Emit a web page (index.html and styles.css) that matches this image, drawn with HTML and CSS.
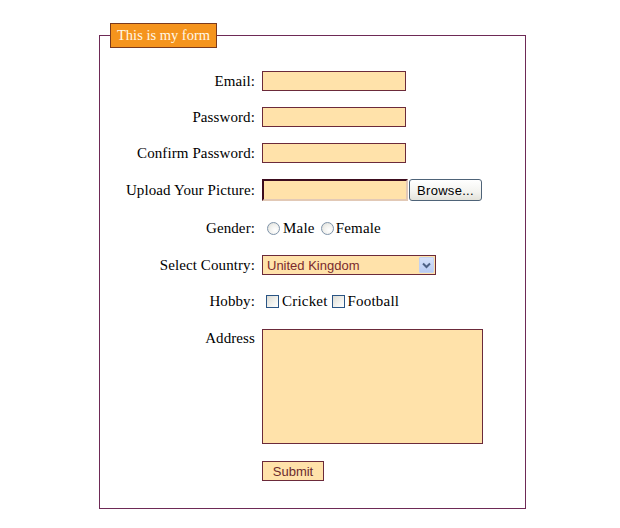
FILE: index.html
```html
<!DOCTYPE html>
<html>
<head>
<meta charset="utf-8">
<title>This is my form</title>
<link rel="stylesheet" href="styles.css">
</head>
<body>
<form class="myform">
  <fieldset class="box">
    <legend class="box-title">This is my form</legend>
    <div class="row">
      <label class="lbl" for="email">Email:</label>
      <div class="ctl"><input class="field" id="email" type="text"></div>
    </div>
    <div class="row">
      <label class="lbl" for="pw">Password:</label>
      <div class="ctl"><input class="field" id="pw" type="password"></div>
    </div>
    <div class="row">
      <label class="lbl" for="cpw">Confirm Password:</label>
      <div class="ctl"><input class="field" id="cpw" type="password"></div>
    </div>
    <div class="row row-tall">
      <label class="lbl" for="pic">Upload Your Picture:</label>
      <div class="ctl file">
        <input class="file-path" id="pic" type="text">
        <button class="browse" type="button">Browse...</button>
      </div>
    </div>
    <div class="row row-tall">
      <span class="lbl">Gender:</span>
      <div class="ctl opts">
        <input class="radio" type="radio" name="g" id="gm"><label for="gm">Male</label>
        <input class="radio" type="radio" name="g" id="gf"><label for="gf">Female</label>
      </div>
    </div>
    <div class="row">
      <label class="lbl" for="country">Select Country:</label>
      <div class="ctl">
        <div class="select-wrap">
          <select class="select" id="country">
            <option>United Kingdom</option>
            <option>United States</option>
          </select>
          <span class="select-arrow">
            <svg width="9" height="7" viewBox="0 0 9 7"><path d="M1 1.5 L4.5 5 L8 1.5" fill="none" stroke="#4d6185" stroke-width="2"/></svg>
          </span>
        </div>
      </div>
    </div>
    <div class="row">
      <span class="lbl">Hobby:</span>
      <div class="ctl opts">
        <input class="check" type="checkbox" id="hc"><label for="hc">Cricket</label>
        <input class="check" type="checkbox" id="hf"><label for="hf">Football</label>
      </div>
    </div>
    <div class="row row-top">
      <label class="lbl" for="addr">Address</label>
      <div class="ctl"><textarea class="area" id="addr"></textarea></div>
    </div>
    <div class="row-submit">
      <button class="submit" type="submit">Submit</button>
    </div>
  </fieldset>
</form>
</body>
</html>
```
FILE: styles.css
```css
html, body {
  margin: 0;
  padding: 0;
  background: #ffffff;
}

body {
  font-family: "Liberation Serif", "Times New Roman", serif;
  font-size: 15px;
  color: #000;
}

.myform {
  padding: 23px 0 0 99px;
}

.box {
  box-sizing: border-box;
  width: 427px;
  margin: 0;
  padding: 15px 0 27px 0;
  border: 1px solid #6e2a56;
  min-width: 0;
}

.box-title {
  box-sizing: border-box;
  height: 25px;
  margin-left: 10px;
  padding: 0 6px;
  background: #f5941d;
  border: 1px solid #7a3a1e;
  color: #fff8e8;
  font-size: 14.5px;
  line-height: 23px;
}

.row {
  display: flex;
  align-items: center;
  height: 36px;
}

.row-tall {
  height: 38px;
}

.row-top {
  align-items: flex-start;
  height: auto;
  margin-top: 10px;
}

.lbl {
  width: 155px;
  flex: none;
  text-align: right;
  margin-right: 7px;
  line-height: 18px;
  letter-spacing: 0.1px;
}

.ctl {
  display: flex;
  align-items: center;
}

.field {
  box-sizing: border-box;
  width: 144px;
  height: 20px;
  margin: 0;
  padding: 1px 3px;
  border: 1px solid #6b2a3a;
  background: #ffe2aa;
  font-family: "Liberation Sans", Arial, sans-serif;
  font-size: 13px;
  outline: none;
}

.file-path {
  box-sizing: border-box;
  width: 146px;
  height: 22px;
  margin: 0;
  padding: 1px 3px;
  border-style: solid;
  border-width: 2px;
  border-color: #3c0c1e #e2c9b6 #e2c9b6 #3c0c1e;
  background: #ffe2aa;
  font-size: 13px;
  outline: none;
}

.browse {
  box-sizing: border-box;
  width: 73px;
  height: 22px;
  margin: 0 0 0 1px;
  padding: 0;
  border: 1px solid #4e6378;
  border-radius: 3px;
  background: linear-gradient(#ffffff, #f3f3ef 60%, #e3e2da);
  font-family: "Liberation Sans", Arial, sans-serif;
  font-size: 13px;
  letter-spacing: 0.3px;
  color: #000;
}

.opts label {
  line-height: 18px;
  letter-spacing: 0.2px;
}

.radio {
  -webkit-appearance: none;
  appearance: none;
  box-sizing: border-box;
  width: 13px;
  height: 13px;
  margin: 0 3px 0 5px;
  border: 1px solid #7f94aa;
  border-radius: 50%;
  background: radial-gradient(circle at 65% 65%, #ffffff 0, #f1f1ee 50%, #d9d9d2 100%);
}

.radio + label + .radio {
  margin-left: 6px;
  margin-right: 2px;
}

.check {
  -webkit-appearance: none;
  appearance: none;
  box-sizing: border-box;
  width: 13px;
  height: 13px;
  margin: 0 3px 0 4px;
  border: 1px solid #2a5585;
  background: linear-gradient(135deg, #dcdcd5 0, #f3f3ef 60%, #ffffff 100%);
}

.check + label + .check {
  margin-left: 4px;
}

.select-wrap {
  position: relative;
  width: 174px;
  height: 20px;
}

.select {
  -webkit-appearance: none;
  appearance: none;
  box-sizing: border-box;
  width: 174px;
  height: 20px;
  margin: 0;
  padding: 0 0 0 4px;
  border: 1px solid #6b2a3a;
  border-radius: 0;
  background: #ffe2aa;
  color: #7a2a2e;
  font-family: "Liberation Sans", Arial, sans-serif;
  font-size: 13px;
  outline: none;
}

.select-arrow {
  position: absolute;
  top: 2px;
  right: 2px;
  box-sizing: border-box;
  width: 15px;
  height: 16px;
  display: flex;
  align-items: center;
  justify-content: center;
  background: linear-gradient(#d5e1fa, #b8cbf3);
  border: 1px solid #c3d2f2;
  border-radius: 1px;
  pointer-events: none;
}

.area {
  display: block;
  box-sizing: border-box;
  width: 221px;
  height: 115px;
  margin: 0;
  padding: 2px;
  border: 1px solid #6b2a3a;
  background: #ffe2aa;
  resize: none;
  outline: none;
}

.row-submit {
  padding-left: 162px;
  margin-top: 17px;
  display: flex;
}

.submit {
  box-sizing: border-box;
  width: 62px;
  height: 20px;
  margin: 0;
  padding: 0;
  border: 1px solid #6b2a3a;
  background: #ffe2aa;
  color: #6b2a2e;
  font-family: "Liberation Sans", Arial, sans-serif;
  font-size: 13px;
}
```
